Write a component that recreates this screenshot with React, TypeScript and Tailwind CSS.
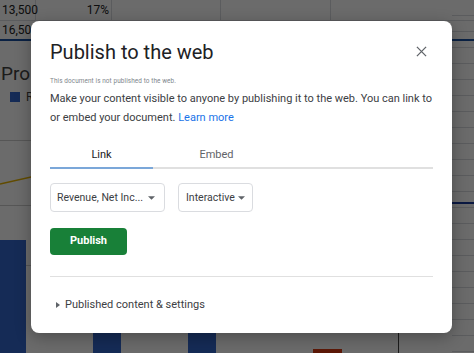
import React from "react";

function Background() {
  const rows = Array.from({ length: 22 }, (_, i) => i);
  return (
    <div className="absolute inset-0 overflow-hidden bg-[#fff]" style={{ fontFamily: "Roboto, Arial, sans-serif" }}>
      <div className="flex flex-col">
        <div className="flex h-[21px] items-center border-b border-[#dadce0] text-[12px] text-[#222]">
          <div className="w-[36px] pl-[2px] border-r border-[#dadce0] h-full flex items-center">13,500</div>
          <div className="w-[76px] text-right pr-[2px] border-r border-[#dadce0] h-full flex items-center justify-end">17%</div>
          <div className="flex-1" />
        </div>
        <div className="flex h-[20px] items-center border-b-[2px] border-[#1a4fa0] text-[12px] text-[#222]">
          <div className="w-[36px] pl-[2px] overflow-hidden whitespace-nowrap">16,500</div>
        </div>
      </div>
      <div className="absolute left-[-6px] top-[60px] text-[19px] text-[#444] flex items-center gap-[3px]">
        <span className="inline-block w-[4px] h-[13px] bg-[#555]" />
        Pro
      </div>
      <div className="absolute left-[10px] top-[92px] w-[10px] h-[10px] bg-[#3366cc]" />
      <div className="absolute left-[26px] top-[88px] text-[12px] text-[#444]">R</div>
      {[140, 205, 265].map((t) => (
        <div key={t} className="absolute left-0 w-[40px] h-px bg-[#ccc]" style={{ top: t }} />
      ))}
      <svg className="absolute left-0 top-[160px]" width="40" height="30">
        <path d="M0 24 L40 15" stroke="#e8b400" strokeWidth="1.5" fill="none" />
      </svg>
      <div className="absolute left-0 top-[240px] w-[26px] h-[120px] bg-[#3366cc]" />
      <div className="absolute left-[93px] top-[330px] w-[28px] h-[40px] bg-[#3366cc]" />
      <div className="absolute left-[188px] top-[330px] w-[28px] h-[40px] bg-[#3366cc]" />
      <div className="absolute left-[313px] top-[349px] w-[29px] h-[10px] bg-[#dc3912]" />
      <div className="absolute left-[398px] top-[333px] w-px h-[30px] bg-[#444]" />
      <div className="absolute left-[452px] top-0 w-[30px]">
        {rows.map((r) => (
          <div key={r} className="h-[16px] border-b border-[#dadce0]" />
        ))}
      </div>
      <div className="absolute left-[452px] top-[202px] w-[30px] h-[2px] bg-[#1a3a9e]" />
      {[220, 330].map((l) => (
        <div key={l} className="absolute top-0 h-[21px] w-px bg-[#dadce0]" style={{ left: l }} />
      ))}
      <div className="absolute inset-0 bg-[rgba(0,0,0,0.58)]" />
    </div>
  );
}

function Caret() {
  return (
    <svg width="7" height="4" viewBox="0 0 10 5" className="shrink-0">
      <path d="M0 0 L10 0 L5 5 Z" fill="#5f6368" />
    </svg>
  );
}

export default function App() {
  return (
    <div className="relative w-[474px] h-[353px] overflow-hidden" style={{ fontFamily: "Roboto, Arial, sans-serif" }}>
      <Background />
      <div className="absolute left-[31px] top-[21px] w-[421px] h-[312px] rounded-[8px] bg-white shadow-[0_4px_16px_rgba(0,0,0,0.3)] px-[19px] pt-[19px]">
        <div className="flex items-start justify-between">
          <h1 className="text-[20px] leading-[24px] text-[#202124]">Publish to the web</h1>
          <button className="mt-[4px] mr-[5px] w-[14px] h-[14px] flex items-center justify-center">
            <svg width="11" height="11" viewBox="0 0 12 12">
              <path d="M1 1 L11 11 M11 1 L1 11" stroke="#5f6368" strokeWidth="1.4" />
            </svg>
          </button>
        </div>
        <p className="mt-[12px] text-[6.4px] text-[#80868b] leading-[10px] tracking-[0.1px]">This document is not published to the web.</p>
        <p className="mt-[3px] text-[11px] leading-[19px] text-[#3c4043] w-[385px]">
          Make your content visible to anyone by publishing it to the web. You can link to or embed your document.{" "}
          <span className="text-[#1a73e8]">Learn more</span>
        </p>
        <div className="mt-[21px] flex w-[383px] border-b-[2px] border-[#e0e0e0] text-[11px] leading-[13px]">
          <div className="relative w-[103px] text-center pb-[6px] text-[#202124]">
            Link
            <div className="absolute left-0 right-0 bottom-[-2px] h-[2px] bg-[#7ba7d9]" />
          </div>
          <div className="w-[127px] text-center pb-[6px] text-[#5f6368]">Embed</div>
        </div>
        <div className="mt-[14px] flex gap-[13px]">
          <div className="h-[29px] w-[115px] rounded-[4px] border border-[#dadce0] flex items-center justify-between pl-[6px] pr-[9px] text-[10.5px] text-[#3c4043]">
            <span>Revenue, Net Inc...</span>
            <Caret />
          </div>
          <div className="h-[29px] w-[75px] rounded-[4px] border border-[#dadce0] flex items-center justify-between pl-[7px] pr-[7px] text-[10.5px] text-[#3c4043]">
            <span>Interactive</span>
            <Caret />
          </div>
        </div>
        <button className="mt-[16px] h-[27px] w-[77px] rounded-[4px] bg-[#188038] text-white text-[11px] font-bold">Publish</button>
        <div className="mt-[21px] w-[383px] h-px bg-[#e0e0e0]" />
        <div className="mt-[20px] flex items-center gap-[5px] pl-[6px] text-[11px] text-[#3c4043]">
          <svg width="4" height="6" viewBox="0 0 4 6">
            <path d="M0 0 L4 3 L0 6 Z" fill="#5f6368" />
          </svg>
          <span>Published content &amp; settings</span>
        </div>
      </div>
    </div>
  );
}
